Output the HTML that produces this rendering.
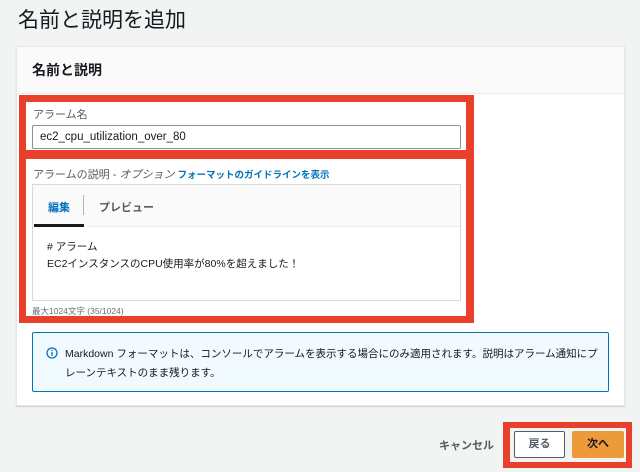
<!DOCTYPE html>
<html><head><meta charset="utf-8"><style>
*{box-sizing:border-box;margin:0;padding:0}
body{width:640px;height:472px;background:#f2f3f3;font-family:"Liberation Sans","Noto Sans CJK JP",sans-serif;color:#16191f;position:relative;overflow:hidden}
.abs{position:absolute}
</style></head><body>
<div class="abs" style="left:18px;top:4px;font-size:21px;color:#16191f;">名前と説明を追加</div>
<div class="abs" style="left:16px;top:46px;width:609px;height:360px;background:#fff;border:1px solid #e5e7e8;box-shadow:0 1px 1px rgba(0,0,0,.15)">
  <div style="height:47px;background:#fafafa;border-bottom:1px solid #eaeded"></div>
</div>
<div class="abs" style="left:32px;top:60px;font-size:14px;font-weight:bold;">名前と説明</div>
<div class="abs" style="left:19px;top:95px;width:455px;height:228px;background:#e8402a"></div>
<div class="abs" style="left:26px;top:102px;width:440px;height:48px;background:#fff"></div>
<div class="abs" style="left:26px;top:159px;width:440px;height:157px;background:#fff"></div>
<div class="abs" style="left:33px;top:106px;font-size:11px;color:#545b64">アラーム名</div>
<div class="abs" style="left:32px;top:125px;width:429px;height:24px;border:1px solid #879596;border-radius:2px;font-size:11.5px;padding:5px 0 0 7px">ec2_cpu_utilization_over_80</div>
<div class="abs" style="left:33px;top:166px;font-size:11px;color:#545b64;white-space:nowrap">アラームの説明 - <i>オプション</i> <span style="color:#0073bb;font-size:9.5px;font-weight:bold">フォーマットのガイドラインを表示</span></div>
<div class="abs" style="left:32px;top:184px;width:429px;height:117px;border:1px solid #d5dbdb;background:#fff">
  <div style="height:42px;background:#fafafa;border-bottom:1px solid #eaeded;position:relative">
    <div class="abs" style="left:15px;top:14px;font-size:11px;font-weight:bold;color:#0073bb">編集</div>
    <div class="abs" style="left:50px;top:10px;width:1px;height:20px;background:#aab7b8"></div>
    <div class="abs" style="left:66px;top:14px;font-size:11px;font-weight:bold;color:#545b64">プレビュー</div>
    <div class="abs" style="left:1px;top:39px;width:50px;height:3px;background:#16191f"></div>
  </div>
  <div class="abs" style="left:14px;top:54px;font-size:10.5px;line-height:17px">#&nbsp;アラーム<br>EC2インスタンスのCPU使用率が80%を超えました！</div>
</div>
<div class="abs" style="left:32px;top:305px;font-size:8.5px;color:#687078">最大1024文字 (35/1024)</div>
<div class="abs" style="left:32px;top:332px;width:577px;height:60px;background:#f1faff;border:1px solid #0073bb;border-radius:2px"></div>
<svg class="abs" style="left:46px;top:347px" width="12" height="12" viewBox="0 0 12 12"><circle cx="6" cy="6" r="5" fill="none" stroke="#0073bb" stroke-width="1.3"/><rect x="5.4" y="5" width="1.3" height="4" fill="#0073bb"/><rect x="5.4" y="2.8" width="1.3" height="1.3" fill="#0073bb"/></svg>
<div class="abs" style="left:65px;top:345px;width:540px;font-size:10.5px;line-height:19px;color:#16191f">Markdown フォーマットは、コンソールでアラームを表示する場合にのみ適用されます。説明はアラーム通知にプレーンテキストのまま残ります。</div>
<div class="abs" style="left:439px;top:437px;font-size:11px;font-weight:bold;color:#545b64">キャンセル</div>
<div class="abs" style="left:503px;top:422px;width:129px;height:46px;background:#e8402a"></div>
<div class="abs" style="left:510px;top:428px;width:116px;height:34px;background:#f2f3f3"></div>
<div class="abs" style="left:514px;top:431px;width:51px;height:27px;background:#fff;border:1px solid #545b64;border-radius:2px;font-size:11px;font-weight:bold;color:#545b64;text-align:center;line-height:25px">戻る</div>
<div class="abs" style="left:572px;top:431px;width:52px;height:27px;background:#ec9a3a;border-radius:2px;font-size:11px;font-weight:bold;color:#16191f;text-align:center;line-height:27px">次へ</div>
</body></html>
